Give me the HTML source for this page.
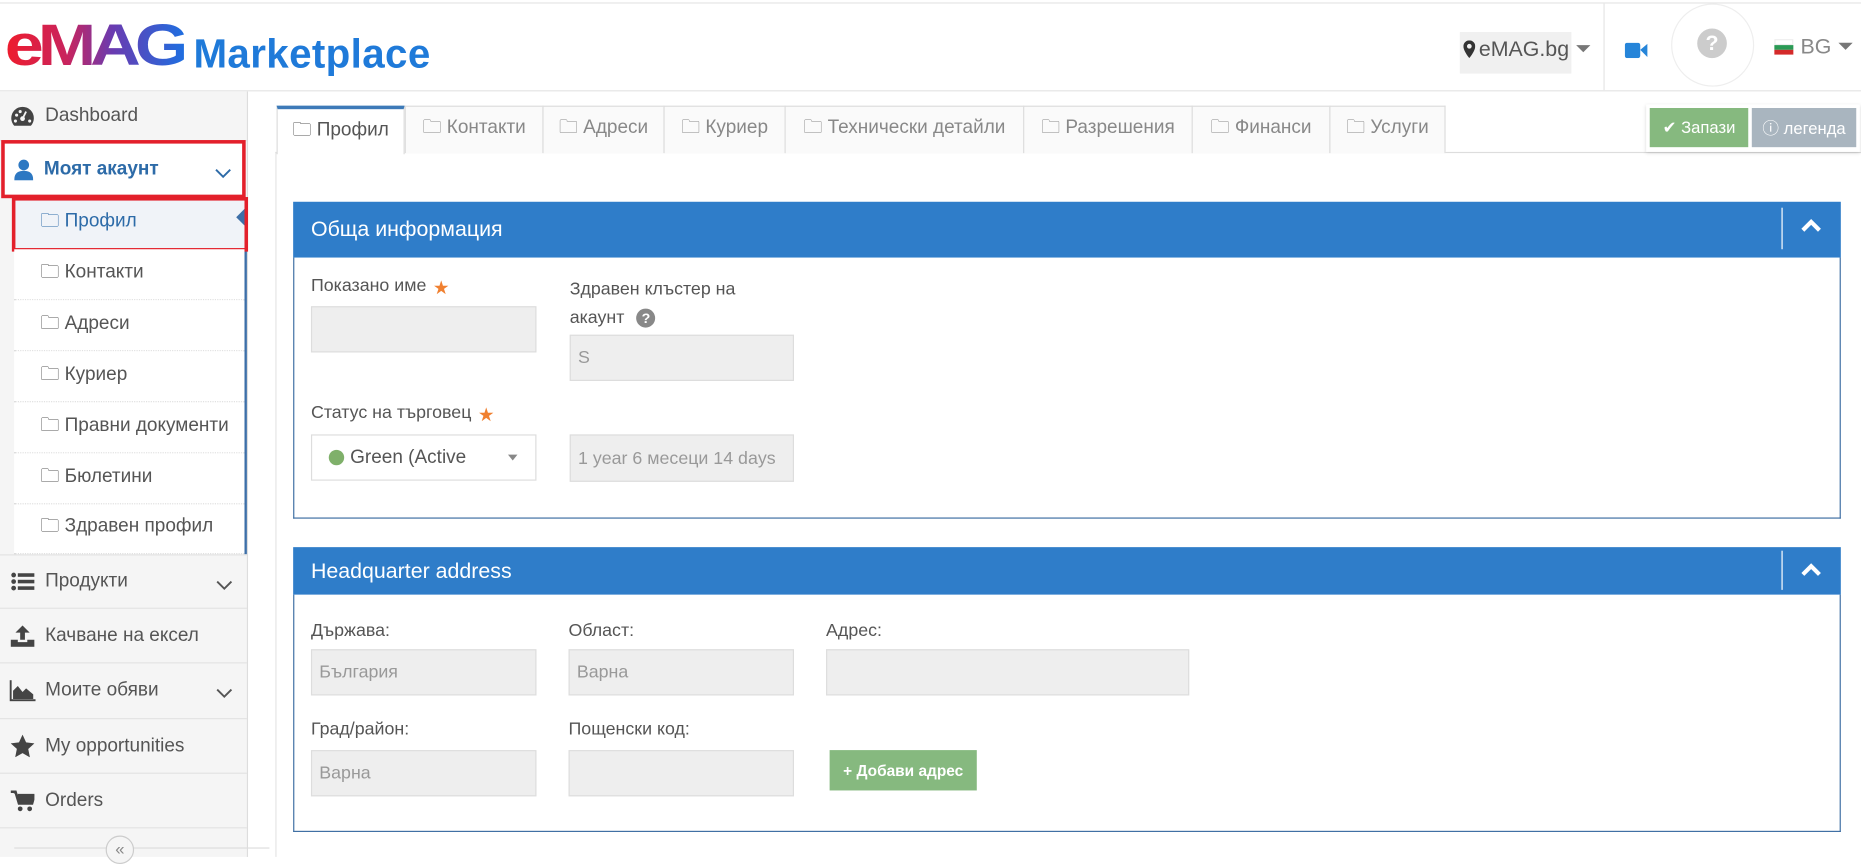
<!DOCTYPE html>
<html><head><meta charset="utf-8"><style>
*{box-sizing:border-box;margin:0;padding:0}
html,body{width:1861px;height:857px;overflow:hidden;background:#fff}
#w{position:absolute;left:0;top:0;width:1568px;height:722px;transform:scale(1.18686);transform-origin:0 0;font-family:"Liberation Sans","Noto Sans CJK SC",sans-serif;color:#555;font-size:15px}
.a{position:absolute}
.it{position:absolute;left:0;width:208px;border-bottom:1px solid #e3e3e3;display:flex;align-items:center;font-size:16px;color:#555}
.it .ic{width:38px;display:flex;justify-content:center}
.sub{position:absolute;left:12px;width:194px;height:43px;display:flex;align-items:center;padding-left:22px;font-size:16px;border-bottom:1px dotted #ddd;background:#fff}
.tab{position:absolute;top:89px;height:40px;border:1px solid #ddd;border-bottom:none;background:#fafafa;font-size:16px;color:#888;display:flex;align-items:center;justify-content:center;gap:3px}
.inp{position:absolute;background:#eee;border:1px solid #ddd;height:39px;font-size:15px;color:#999;padding-left:6px;display:flex;align-items:center}
.lbl{position:absolute;font-size:15px;color:#555}
.ph{position:absolute;left:247px;width:1304px;background:#2f7dc9;color:#fff;font-size:18px;padding-left:15px;display:flex;align-items:center}
.pb{position:absolute;left:247px;width:1304px;border:1px solid #3f6fa3;border-top:none}
.st{color:#f08030;font-size:13px;margin-left:6px;vertical-align:top}
</style></head><body><div id="w">
<div class="a" style="left:0;top:2px;width:1568px;height:1px;background:#e5e5e5"></div>
<div class="a" style="left:0;top:76px;width:1568px;height:1px;background:#e5e5e5"></div>
<div class="a" style="left:4px;top:14px;font-size:58px;font-weight:900;letter-spacing:-5px;line-height:58px;white-space:nowrap;background:linear-gradient(90deg,#ef1c2c 0%,#c8245e 35%,#6a3bb0 60%,#1f6ee0 100%);-webkit-background-clip:text;background-clip:text;color:transparent;transform:scale(1.02,0.85);transform-origin:0 0">eMAG</div>
<div class="a" style="left:163px;top:26px;font-size:34px;font-weight:bold;color:#1f7ad9;line-height:40px;letter-spacing:0.3px">Marketplace</div>
<div class="a" style="left:1230px;top:27px;width:94px;height:35px;background:#f0f0f0"></div>
<svg class="a" style="left:1233px;top:34px" width="10" height="15" viewBox="0 0 10 15"><path d="M5 0a5 5 0 0 0-5 5c0 4 5 10 5 10s5-6 5-10a5 5 0 0 0-5-5zm0 7a2 2 0 1 1 0-4 2 2 0 0 1 0 4z" fill="#333"/></svg>
<div class="a" style="left:1246px;top:31px;font-size:18px;color:#555">eMAG.bg</div>
<div class="a" style="left:1328px;top:38px;border:6px solid transparent;border-top:6px solid #777;border-bottom:none"></div>
<div class="a" style="left:1351px;top:3px;width:1px;height:73px;background:#e5e5e5"></div>
<svg class="a" style="left:1369px;top:36px" width="20" height="13"><rect x="0" y="0" width="13" height="13" rx="2" fill="#2685d9"/><path d="M13 6l6-5v11z" fill="#2685d9"/></svg>
<div class="a" style="left:1408px;top:3px;width:70px;height:70px;border:1px solid #eee;border-radius:50%"></div>
<div class="a" style="left:1430px;top:24px;width:25px;height:25px;border-radius:50%;background:#ccc;color:#fff;font-weight:bold;font-size:18px;text-align:center;line-height:25px">?</div>
<div class="a" style="left:1495px;top:33px;width:16px;height:5px;background:#fff;border:1px solid #eee"></div>
<div class="a" style="left:1495px;top:38px;width:16px;height:4px;background:#2a9a55"></div>
<div class="a" style="left:1495px;top:42px;width:16px;height:4px;background:#d42a2a"></div>
<div class="a" style="left:1517px;top:29px;font-size:18px;color:#888">BG</div>
<div class="a" style="left:1549px;top:36px;border:6px solid transparent;border-top:6px solid #777;border-bottom:none"></div>

<div class="a" style="left:0;top:77px;width:209px;height:645px;background:#f5f5f5;border-right:1px solid #ddd"></div>
<div class="it" style="top:77px;height:42px"><span class="ic"><svg width="20" height="18" viewBox="0 0 20 18"><path d="M10 1A9.5 9.5 0 0 0 .5 10.5c0 2.5 1 4.8 2.5 6.5h14c1.5-1.7 2.5-4 2.5-6.5A9.5 9.5 0 0 0 10 1z" fill="#444"/><circle cx="10" cy="11" r="2" fill="#f5f5f5"/><path d="M10 11l3-6" stroke="#f5f5f5" stroke-width="1.5"/><circle cx="5" cy="8" r="1.3" fill="#f5f5f5"/><circle cx="4" cy="13" r="1.3" fill="#f5f5f5"/><circle cx="8" cy="5" r="1.3" fill="#f5f5f5"/><circle cx="16" cy="13" r="1.3" fill="#f5f5f5"/></svg></span>Dashboard</div>
<div class="a" style="left:1px;top:118px;width:206px;height:49px;background:#fff;border:3px solid #e3202b"></div>
<div class="it" style="top:121px;height:43px;border:none;font-weight:bold;color:#2d6ba8;left:3px;width:200px"><span class="ic" style="width:34px"><svg width="16" height="18" viewBox="0 0 16 18"><circle cx="8" cy="5" r="4.5" fill="#2d78c2"/><path d="M0 18c0-6 3-8 8-8s8 2 8 8z" fill="#2d78c2"/></svg></span>Моят акаунт<span style="position:absolute;right:8px;top:17px"><svg width="14" height="9"><path d="M1 1l6 6 6-6" stroke="#2d6ba8" stroke-width="1.6" fill="none"/></svg></span></div>
<div class="a" style="left:12px;top:167px;width:194px;height:300px;background:#fff"></div>
<div class="a" style="left:16px;top:167px;width:0;height:300px;border-left:1px dotted #bbb"></div>
<div class="a" style="left:205px;top:167px;width:3px;height:300px;background:#3d6fa8"></div>
<div class="sub" style="top:167px;background:#f0f3f8;color:#2d6ba8">🗀&nbsp;Профил</div>
<div class="a" style="left:10px;top:166px;width:199px;height:46px;border:3px solid #e3202b"></div>
<div class="a" style="left:199px;top:176px;border:7px solid transparent;border-right:7px solid #3d6fa8;border-left:none;height:0"></div>
<div class="sub" style="top:210px">🗀&nbsp;Контакти</div>
<div class="sub" style="top:253px">🗀&nbsp;Адреси</div>
<div class="sub" style="top:296px">🗀&nbsp;Куриер</div>
<div class="sub" style="top:339px">🗀&nbsp;Правни документи</div>
<div class="sub" style="top:382px">🗀&nbsp;Бюлетини</div>
<div class="sub" style="top:425px;height:42px">🗀&nbsp;Здравен профил</div>
<div class="it" style="top:467px;height:46px;border-top:1px solid #e3e3e3"><span class="ic"><svg width="20" height="16"><circle cx="2.5" cy="2.5" r="2" fill="#444"/><circle cx="2.5" cy="8" r="2" fill="#444"/><circle cx="2.5" cy="13.5" r="2" fill="#444"/><rect x="6" y="1" width="14" height="3" fill="#444"/><rect x="6" y="6.5" width="14" height="3" fill="#444"/><rect x="6" y="12" width="14" height="3" fill="#444"/></svg></span>Продукти<span style="position:absolute;right:12px;top:17px"><svg width="14" height="9"><path d="M1 1l6 6 6-6" stroke="#555" stroke-width="1.6" fill="none"/></svg></span></div>
<div class="it" style="top:513px;height:46px"><span class="ic"><svg width="20" height="18"><path d="M10 0l6 6h-4v6H8V6H4z" fill="#444"/><path d="M0 12h6v2h8v-2h6v6H0z" fill="#444"/></svg></span>Качване на ексел</div>
<div class="it" style="top:559px;height:47px"><span class="ic"><svg width="22" height="18"><path d="M1 0v17h21" stroke="#444" stroke-width="1.6" fill="none"/><path d="M3 16V9l4-4 4 5 3-3 6 5v4z" fill="#444"/></svg></span>Моите обяви<span style="position:absolute;right:12px;top:17px"><svg width="14" height="9"><path d="M1 1l6 6 6-6" stroke="#555" stroke-width="1.6" fill="none"/></svg></span></div>
<div class="it" style="top:606px;height:46px"><span class="ic"><svg width="20" height="19" viewBox="0 0 20 19"><path d="M10 0l3 6.5 7 .8-5.2 4.8 1.4 7L10 15.5 3.8 19l1.4-7L0 7.3l7-.8z" fill="#444"/></svg></span>My opportunities</div>
<div class="it" style="top:652px;height:46px"><span class="ic"><svg width="20" height="18"><path d="M0 1h4l3 10h11l2-7H6" stroke="#444" stroke-width="2.2" fill="#444"/><circle cx="8" cy="15.5" r="2" fill="#444"/><circle cx="16" cy="15.5" r="2" fill="#444"/></svg></span>Orders</div>
<div class="a" style="left:12px;top:714px;width:215px;height:1px;background:#ddd"></div>
<div class="a" style="left:89px;top:704px;width:24px;height:24px;border-radius:50%;border:1px solid #ccc;background:#f5f5f5;font-size:14px;color:#888;text-align:center;line-height:20px">«</div>

<div class="a" style="left:232px;top:128px;width:1px;height:594px;background:#e5e5e5"></div>
<div class="a" style="left:232px;top:128px;width:1336px;height:1px;background:#ddd"></div>
<div class="tab" style="left:233px;width:108px;background:#fff;border-top:3px solid #3d7ab8;color:#555;height:41px">🗀 Профил</div>
<div class="tab" style="left:341px;width:117px">🗀 Контакти</div>
<div class="tab" style="left:457px;width:103px">🗀 Адреси</div>
<div class="tab" style="left:559px;width:103px">🗀 Куриер</div>
<div class="tab" style="left:661px;width:202px">🗀 Технически детайли</div>
<div class="tab" style="left:862px;width:143px">🗀 Разрешения</div>
<div class="tab" style="left:1004px;width:117px">🗀 Финанси</div>
<div class="tab" style="left:1120px;width:98px">🗀 Услуги</div>
<div class="a" style="left:1387px;top:88px;width:180px;height:40px;background:#fff;box-shadow:0 1px 3px rgba(0,0,0,.15)"></div>
<div class="a" style="left:1390px;top:91px;width:83px;height:33px;background:#86b97f;color:#fff;font-size:14px;display:flex;align-items:center;justify-content:center">✔&nbsp;Запази</div>
<div class="a" style="left:1476px;top:91px;width:88px;height:33px;background:#a9b5bf;color:#fff;font-size:14px;display:flex;align-items:center;justify-content:center">ⓘ&nbsp;легенда</div>

<div class="ph" style="top:170px;height:47px">Обща информация</div>
<div class="a" style="left:1501px;top:175px;width:1px;height:35px;background:#fff"></div>
<svg class="a" style="left:1517px;top:184px" width="18" height="12"><path d="M2 10l7-7 7 7" stroke="#fff" stroke-width="3.5" fill="none"/></svg>
<div class="pb" style="top:217px;height:220px"></div>
<div class="lbl" style="left:262px;top:232px">Показано име<span class="st">★</span></div>
<div class="inp" style="left:262px;top:258px;width:190px"></div>
<div class="lbl" style="left:480px;top:232px;line-height:24px">Здравен клъстер на<br>акаунт <span style="display:inline-block;width:16px;height:16px;border-radius:50%;background:#888;color:#fff;font-size:12px;font-weight:bold;text-align:center;line-height:16px;margin-left:6px">?</span></div>
<div class="inp" style="left:480px;top:282px;width:189px;height:39px">S</div>
<div class="lbl" style="left:262px;top:339px">Статус на търговец<span class="st">★</span></div>
<div class="a" style="left:262px;top:366px;width:190px;height:39px;border:1px solid #ddd;background:#fff;display:flex;align-items:center;padding-left:14px;font-size:16px;color:#555"><span style="display:inline-block;width:13px;height:13px;border-radius:50%;background:#7fb06a;margin-right:5px"></span>Green (Active</div>
<div class="a" style="left:428px;top:383px;border:4px solid transparent;border-top:5px solid #888;border-bottom:none"></div>
<div class="inp" style="left:480px;top:366px;width:189px;height:40px">1 year 6 месеци 14 days</div>

<div class="ph" style="top:461px;height:40px">Headquarter address</div>
<div class="a" style="left:1501px;top:464px;width:1px;height:33px;background:#fff"></div>
<svg class="a" style="left:1517px;top:474px" width="18" height="12"><path d="M2 10l7-7 7 7" stroke="#fff" stroke-width="3.5" fill="none"/></svg>
<div class="pb" style="top:501px;height:200px"></div>
<div class="lbl" style="left:262px;top:523px">Държава:</div>
<div class="lbl" style="left:479px;top:523px">Област:</div>
<div class="lbl" style="left:696px;top:523px">Адрес:</div>
<div class="inp" style="left:262px;top:547px;width:190px">България</div>
<div class="inp" style="left:479px;top:547px;width:190px">Варна</div>
<div class="inp" style="left:696px;top:547px;width:306px"></div>
<div class="lbl" style="left:262px;top:606px">Град/район:</div>
<div class="lbl" style="left:479px;top:606px">Пощенски код:</div>
<div class="inp" style="left:262px;top:632px;width:190px">Варна</div>
<div class="inp" style="left:479px;top:632px;width:190px"></div>
<div class="a" style="left:699px;top:632px;width:124px;height:34px;background:#86b97f;color:#fff;font-size:13px;font-weight:bold;display:flex;align-items:center;justify-content:center">+ Добави адрес</div>
</div></body></html>
